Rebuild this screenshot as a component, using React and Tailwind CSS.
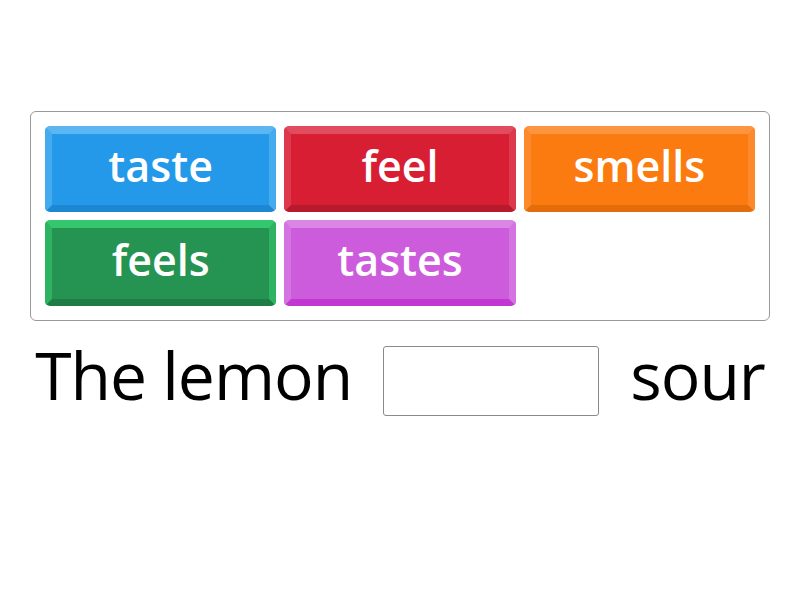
const TILES = [
  { word: 'taste', cls: 'bg-[#2499e9] border-t-[#5cb6f1] border-x-[#44abef] border-b-[#1d87d4]' },
  { word: 'feel', cls: 'bg-[#d81e33] border-t-[#e14d5e] border-x-[#dc3a4c] border-b-[#b71a2c]' },
  { word: 'smells', cls: 'bg-[#fb7b10] border-t-[#fd9540] border-x-[#fc8a2c] border-b-[#e36d0b]' },
  { word: 'feels', cls: 'bg-[#259351] border-t-[#34c76d] border-x-[#2db362] border-b-[#1f7c44]' },
  { word: 'tastes', cls: 'bg-[#cc5cdc] border-t-[#da86e5] border-x-[#d374e1] border-b-[#c236d2]' },
];

export default function App() {
  return (
    <div className="w-[800px] h-[600px] bg-white pt-[111px] px-[30px] font-['Open_Sans',sans-serif]">
      <div className="border border-[#999999] rounded-[6px] p-[14px] grid grid-cols-3 gap-2">
        {TILES.map((t) => (
          <div
            key={t.word}
            className={`h-[86px] rounded-[5px] border-t-[8px] border-x-[7px] border-b-[7px] flex items-center justify-center text-white text-[43px] font-semibold leading-none ${t.cls}`}
          >
            <span className="-mt-[8px]">{t.word}</span>
          </div>
        ))}
      </div>

      <div className="mt-[25px] h-[70px] flex items-start justify-center gap-[31px] text-[66px] tracking-[-1px] leading-none text-black">
        <span className="-mt-[5px] shrink-0 whitespace-nowrap">The lemon</span>
        <div className="shrink-0 w-[216px] h-[70px] border border-[#8a8a8a] rounded-[3px] bg-white" />
        <span className="-mt-[5px] shrink-0">sour</span>
      </div>
    </div>
  );
}
